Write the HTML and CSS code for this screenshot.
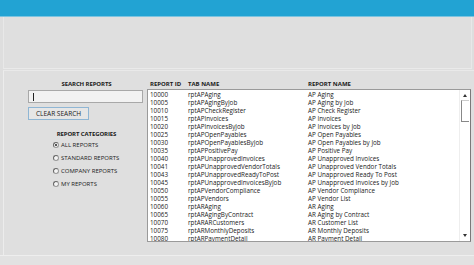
FILE: index.html
```html
<!DOCTYPE html>
<html>
<head>
<meta charset="utf-8">
<link rel="stylesheet" href="styles.css">
</head>
<body>
<div class="topbar"></div>
<div class="toppanel"></div>
<div class="main">
  <div class="side">
    <div class="lbl">SEARCH REPORTS</div>
    <div class="input"><span class="caret"></span></div>
    <div class="btn">CLEAR SEARCH</div>
    <div class="lbl cat">REPORT CATEGORIES</div>
    <div class="radios">
      <div class="radio"><span class="dot on"></span>ALL REPORTS</div>
      <div class="radio"><span class="dot"></span>STANDARD REPORTS</div>
      <div class="radio"><span class="dot"></span>COMPANY REPORTS</div>
      <div class="radio"><span class="dot"></span>MY REPORTS</div>
    </div>
  </div>
  <div class="tablewrap">
    <div class="thead"><span class="c1">REPORT ID</span><span class="c2">TAB NAME</span><span class="c3">REPORT NAME</span></div>
    <div class="list">
      <div class="rows">
        <div class="row"><span class="c1">10000</span><span class="c2">rptAPAging</span><span class="c3">AP Aging</span></div>
        <div class="row"><span class="c1">10005</span><span class="c2">rptAPAgingByJob</span><span class="c3">AP Aging by Job</span></div>
        <div class="row"><span class="c1">10010</span><span class="c2">rptAPCheckRegister</span><span class="c3">AP Check Register</span></div>
        <div class="row"><span class="c1">10015</span><span class="c2">rptAPInvoices</span><span class="c3">AP Invoices</span></div>
        <div class="row"><span class="c1">10020</span><span class="c2">rptAPInvoicesByJob</span><span class="c3">AP Invoices by Job</span></div>
        <div class="row"><span class="c1">10025</span><span class="c2">rptAPOpenPayables</span><span class="c3">AP Open Payables</span></div>
        <div class="row"><span class="c1">10030</span><span class="c2">rptAPOpenPayablesByJob</span><span class="c3">AP Open Payables by Job</span></div>
        <div class="row"><span class="c1">10035</span><span class="c2">rptAPPositivePay</span><span class="c3">AP Positive Pay</span></div>
        <div class="row"><span class="c1">10040</span><span class="c2">rptAPUnapprovedInvoices</span><span class="c3">AP Unapproved Invoices</span></div>
        <div class="row"><span class="c1">10041</span><span class="c2">rptAPUnapprovedVendorTotals</span><span class="c3">AP Unapproved Vendor Totals</span></div>
        <div class="row"><span class="c1">10043</span><span class="c2">rptAPUnapprovedReadyToPost</span><span class="c3">AP Unapproved Ready To Post</span></div>
        <div class="row"><span class="c1">10045</span><span class="c2">rptAPUnapprovedInvoicesByJob</span><span class="c3">AP Unapproved Invoices by Job</span></div>
        <div class="row"><span class="c1">10050</span><span class="c2">rptAPVendorCompliance</span><span class="c3">AP Vendor Compliance</span></div>
        <div class="row"><span class="c1">10055</span><span class="c2">rptAPVendors</span><span class="c3">AP Vendor List</span></div>
        <div class="row"><span class="c1">10060</span><span class="c2">rptARAging</span><span class="c3">AR Aging</span></div>
        <div class="row"><span class="c1">10065</span><span class="c2">rptARAgingByContract</span><span class="c3">AR Aging by Contract</span></div>
        <div class="row"><span class="c1">10070</span><span class="c2">rptARARCustomers</span><span class="c3">AR Customer List</span></div>
        <div class="row"><span class="c1">10075</span><span class="c2">rptARMonthlyDeposits</span><span class="c3">AR Monthly Deposits</span></div>
        <div class="row"><span class="c1">10080</span><span class="c2">rptARPaymentDetail</span><span class="c3">AR Payment Detail</span></div>
      </div>
      <div class="scroll">
        <div class="arrow up"></div>
        <div class="thumb"></div>
        <div class="track"></div>
        <div class="arrow down"></div>
      </div>
    </div>
  </div>
</div>
<div class="bottom"></div>
</body>
</html>
```

FILE: styles.css
```css
* { box-sizing: border-box; }
html, body { margin: 0; padding: 0; }
body {
  width: 474px; height: 265px; overflow: hidden;
  background: #dedede;
  font-family: "Open Sans", "Liberation Sans", sans-serif;
  color: #222;
}
.topbar {
  height: 17px;
  background: #22a3d3;
  border-bottom: 1px solid #7cc4e0;
}
.toppanel {
  height: 52px;
  margin: 0 2px 0 3px;
  border-left: 1px solid #e8e8e8;
  border-right: 1px solid #e8e8e8;
  border-bottom: 1px solid #eaeaea;
  background: #dfdfdf;
}
.main {
  display: flex;
  height: 185px;
  margin: 1px 0 0 3px;
  border-left: 1px solid #ececec;
  border-top: 1px solid #e9e9e9;
  background: #dfdfdf;
}
.side {
  width: 143px;
  padding: 9px 0 0 24px;
  display: flex;
  flex-direction: column;
}
.lbl {
  font-size: 6px;
  font-weight: bold;
  color: #1a1a1a;
  text-align: center;
  width: 117px;
  letter-spacing: -0.1px;
  line-height: 8px;
}
.input {
  margin-top: 2px;
  width: 115px;
  height: 13px;
  background: #f2f2f2;
  border: 1px solid #a8a8a8;
  position: relative;
}
.caret {
  position: absolute;
  left: 4px; top: 2px;
  width: 1px; height: 8px;
  background: #222;
}
.btn {
  margin-top: 4px;
  width: 61px;
  height: 13px;
  border: 1px solid #8fb6d4;
  background: #e6e6e6;
  font-size: 6.5px;
  line-height: 11px;
  text-align: center;
  color: #222;
}
.cat { margin-top: 10px; }
.radios {
  margin-top: 3px;
  padding-left: 25px;
  display: flex;
  flex-direction: column;
  gap: 5px;
}
.radio {
  font-size: 6px;
  line-height: 8px;
  display: flex;
  align-items: center;
  gap: 2px;
  color: #222;
}
.dot {
  width: 6px; height: 6px;
  border-radius: 50%;
  border: 1px solid #999;
  border-top-color: #666;
  border-left-color: #666;
  background: #f4f4f4;
  position: relative;
}
.dot.on::after {
  content: "";
  position: absolute;
  left: 1px; top: 1px;
  width: 2px; height: 2px;
  border-radius: 50%;
  background: #222;
}
.tablewrap {
  width: 324px;
  padding-top: 9px;
  display: flex;
  flex-direction: column;
}
.thead {
  display: flex;
  font-size: 6px;
  font-weight: bold;
  line-height: 8px;
  height: 9px;
  padding-left: 3px;
  color: #1a1a1a;
}
.c1 { width: 38px; flex: none; }
.c2 { width: 120px; flex: none; }
.c3 { flex: 1; }
.list {
  width: 324px;
  height: 153px;
  background: #fff;
  border: 1px solid #9a9a9a;
  border-right-color: #7a7a7a;
  display: flex;
}
.rows {
  flex: 1;
  padding: 1px 0 0 2px;
  overflow: hidden;
}
.row {
  display: flex;
  font-size: 6.3px;
  line-height: 8px;
  height: 8px;
  color: #222;
  white-space: nowrap;
}
.scroll {
  width: 11px;
  display: flex;
  flex-direction: column;
  background: #fff;
  border-left: 1px solid #eee;
}
.arrow { height: 10px; position: relative; }
.arrow::after {
  content: "";
  position: absolute;
  left: 3px; top: 4px;
  border-left: 2px solid transparent;
  border-right: 2px solid transparent;
}
.arrow.up::after { border-bottom: 3px solid #333; }
.arrow.down::after { border-top: 3px solid #333; top: 3px; }
.thumb {
  height: 22px;
  margin: 0 1px;
  border-left: 1px solid #888;
  border-bottom: 1px solid #888;
  border-top: 1px solid #ccc;
  background: #fff;
}
.track { flex: 1; }
.bottom {
  height: 12px;
  border-top: 1px solid #eeeeee;
  background: #e2e2e2;
}
```
